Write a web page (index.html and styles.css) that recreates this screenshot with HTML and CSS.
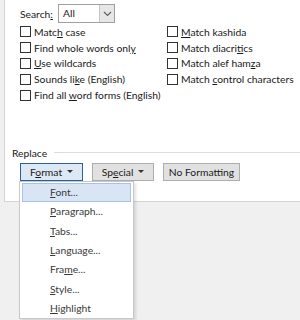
FILE: index.html
```html
<!DOCTYPE html>
<html>
<head>
<meta charset="utf-8">
<link rel="stylesheet" href="styles.css">
</head>
<body>
<div class="panel">
  <div class="search-row">
    <span class="lbl">Search<u>:</u></span>
    <div class="select">
      <span class="sel-text">All</span>
      <span class="sel-btn"><svg width="9" height="6" viewBox="0 0 9 6"><path d="M1 1 L4.5 4.5 L8 1" fill="none" stroke="#606060" stroke-width="1.2"/></svg></span>
    </div>
  </div>
  <div class="opts">
    <label class="opt"><span class="cb"></span><span>Matc<u>h</u> case</span></label>
    <label class="opt"><span class="cb"></span><span><u>M</u>atch kashida</span></label>
    <label class="opt"><span class="cb"></span><span>Find whole words onl<u>y</u></span></label>
    <label class="opt"><span class="cb"></span><span>Match diacri<u>t</u>ics</span></label>
    <label class="opt"><span class="cb"></span><span><u>U</u>se wildcards</span></label>
    <label class="opt"><span class="cb"></span><span>Match alef ham<u>z</u>a</span></label>
    <label class="opt"><span class="cb"></span><span>Sounds li<u>k</u>e (English)</span></label>
    <label class="opt"><span class="cb"></span><span>Match <u>c</u>ontrol characters</span></label>
    <label class="opt wide"><span class="cb"></span><span>Find all <u>w</u>ord forms (English)</span></label>
  </div>
  <div class="replace">
    <div class="group-title"><span>Replace</span><span class="rule"></span></div>
    <div class="btns">
      <button class="btn focus"><span>F<u>o</u>rmat</span><span class="tri"></span></button>
      <button class="btn"><span>Sp<u>e</u>cial</span><span class="tri"></span></button>
      <button class="btn nf"><span>No Format<u>t</u>ing</span></button>
    </div>
  </div>
</div>
<div class="menu">
  <div class="item hl"><u>F</u>ont...</div>
  <div class="item"><u>P</u>aragraph...</div>
  <div class="item"><u>T</u>abs...</div>
  <div class="item"><u>L</u>anguage...</div>
  <div class="item">Fra<u>m</u>e...</div>
  <div class="item"><u>S</u>tyle...</div>
  <div class="item"><u>H</u>ighlight</div>
</div>
</body>
</html>
```
FILE: styles.css
```css
* { box-sizing: border-box; }
html, body { margin: 0; padding: 0; }
body {
  width: 300px;
  height: 320px;
  background: #f0f0f0;
  font-family: Lato, "Noto Sans", sans-serif;
  font-size: 10.3px;
  color: #1a1a1a;
  position: relative;
  overflow: hidden;
}
u { text-decoration: underline; text-underline-offset: 1px; }
.panel {
  margin-left: 4px;
  width: 296px;
  height: 202px;
  background: #fff;
  border-left: 1px solid #d4d4d4;
  border-bottom: 1px solid #d4d4d4;
  padding-top: 4px;
}
.search-row {
  display: flex;
  align-items: center;
  padding-left: 15px;
  height: 19px;
}
.lbl { width: 38px; }
.select {
  display: flex;
  width: 57px;
  height: 19px;
  border: 1px solid #a0a0a0;
}
.sel-text { flex: 1; padding-left: 4px; line-height: 17px; }
.sel-btn {
  width: 15px;
  background: #e6e6e6;
  border-left: 1px solid #c4c4c4;
  display: flex;
  align-items: center;
  justify-content: center;
}
.opts {
  display: grid;
  grid-template-columns: 147px auto;
  grid-auto-rows: 15.8px;
  padding-left: 15px;
  margin-top: 1px;
}
.opt {
  display: flex;
  align-items: center;
  white-space: nowrap;
}
.opt.wide { grid-column: 1 / 3; }
.cb {
  width: 11px;
  height: 11px;
  border: 1px solid #333;
  margin-right: 3px;
  flex: none;
}
.replace { margin-top: 43px; }
.group-title {
  display: flex;
  align-items: center;
  padding-left: 7px;
  height: 14px;
}
.rule { flex: 1; height: 1px; background: #dcdcdc; margin-left: 7px; }
.btns {
  display: flex;
  gap: 9px;
  padding-left: 15px;
  margin-top: 3px;
}
.btn {
  font: inherit;
  color: #1a1a1a;
  height: 18px;
  width: 62px;
  padding: 0;
  background: #e1e1e1;
  border: 1px solid #adadad;
  display: flex;
  align-items: center;
  justify-content: center;
  white-space: nowrap;
}
.btn.focus { background: #dde8f5; border: 1px solid #2c5f9e; width: 63px; }
.btn.nf { width: 77px; }
.tri {
  display: inline-block;
  width: 0;
  height: 0;
  border-left: 3px solid transparent;
  border-right: 3px solid transparent;
  border-top: 3px solid #333;
  margin-left: 5px;
}
.menu {
  position: absolute;
  left: 19px;
  top: 181px;
  width: 115px;
  height: 138px;
  background: #fff;
  border: 1px solid #c8c8c8;
  box-shadow: 2px 2px 3px rgba(0,0,0,0.12);
  padding: 1px 2px;
}
.item {
  height: 19.33px;
  line-height: 17.33px;
  padding-left: 27px;
  border: 1px solid transparent;
  color: #3a3a3a;
}
.item.hl { background: #d9e5f5; border-color: #a9c2e6; }
```
